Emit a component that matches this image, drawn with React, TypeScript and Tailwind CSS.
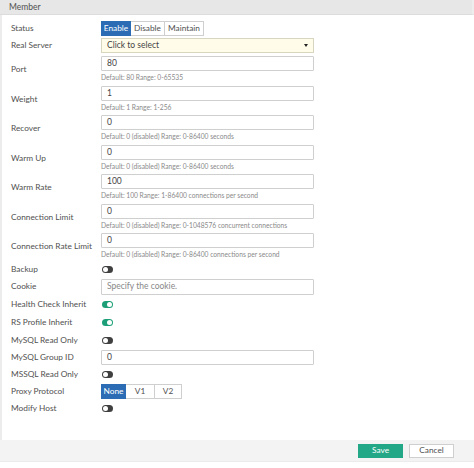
import React from "react";

const font = { fontFamily: "Lato, 'Open Sans', sans-serif" };

function Label({ text }: { text: string }) {
  return (
    <div className="w-[99px] shrink-0 pl-[9px] text-[8.3px] text-[#505050] whitespace-nowrap">
      {text}
    </div>
  );
}

function TextRow({
  label,
  value,
  help,
}: {
  label: string;
  value: string;
  help: string;
}) {
  return (
    <div className="flex items-center mb-[2.5px]">
      <Label text={label} />
      <div className="flex flex-col">
        <div className="w-[213px] h-[15px] border border-[#cfcfcf] rounded-[1px] bg-white flex items-center px-[5px] text-[8.5px] text-[#444]">
          {value}
        </div>
        <div className="h-[12px] leading-[12px] text-[6.7px] text-[#8a8a8a] whitespace-nowrap">
          {help}
        </div>
      </div>
    </div>
  );
}

function Toggle({ on }: { on?: boolean }) {
  return (
    <div
      className={`w-[11px] h-[7px] rounded-full flex items-center px-[1px] ${
        on ? "bg-[#1c9f78] justify-end" : "bg-[#404040] justify-start"
      }`}
    >
      <div className="w-[5px] h-[5px] rounded-full bg-white" />
    </div>
  );
}

function ToggleRow({ label, on }: { label: string; on?: boolean }) {
  return (
    <div className="flex items-center h-[18px]">
      <Label text={label} />
      <div className="pl-[1px]">
        <Toggle on={on} />
      </div>
    </div>
  );
}

export default function App() {
  return (
    <div
      className="w-[474px] h-[468px] bg-white relative overflow-hidden"
      style={font}
    >
      <div className="h-[15px] bg-[#e7e7e7] border-b border-[#dcdcdc] border-r-2 border-r-[#ededed] flex items-center pl-[9px] text-[8.5px] text-[#505050]">
        Member
      </div>
      <div className="border-l-[2px] border-[#ececec] h-[425px] pt-[6px]">
        {/* Status */}
        <div className="flex items-center h-[15px] mb-[2px]">
          <Label text="Status" />
          <div className="flex h-[15px] text-[8.3px]">
            <div className="w-[30px] flex items-center justify-center bg-[#2b6cb5] text-white border border-[#2b6cb5]">
              Enable
            </div>
            <div className="w-[34px] flex items-center justify-center border border-l-0 border-[#cfcfcf] text-[#505050]">
              Disable
            </div>
            <div className="w-[39px] flex items-center justify-center border border-l-0 border-[#cfcfcf] text-[#505050]">
              Maintain
            </div>
          </div>
        </div>
        {/* Real Server */}
        <div className="flex items-center mb-[3px]">
          <Label text="Real Server" />
          <div className="w-[213px] h-[15px] border border-[#d9d6c0] bg-[#fffdea] flex items-center justify-between px-[5px] text-[8.5px] text-[#444]">
            <span>Click to select</span>
            <span className="w-0 h-0 border-l-[2.5px] border-r-[2.5px] border-t-[3px] border-l-transparent border-r-transparent border-t-[#222]" />
          </div>
        </div>
        <TextRow label="Port" value="80" help="Default: 80 Range: 0-65535" />
        <TextRow label="Weight" value="1" help="Default: 1 Range: 1-256" />
        <TextRow
          label="Recover"
          value="0"
          help="Default: 0 (disabled) Range: 0-86400 seconds"
        />
        <TextRow
          label="Warm Up"
          value="0"
          help="Default: 0 (disabled) Range: 0-86400 seconds"
        />
        <TextRow
          label="Warm Rate"
          value="100"
          help="Default: 100 Range: 1-86400 connections per second"
        />
        <TextRow
          label="Connection Limit"
          value="0"
          help="Default: 0 (disabled) Range: 0-1048576 concurrent connections"
        />
        <TextRow
          label="Connection Rate Limit"
          value="0"
          help="Default: 0 (disabled) Range: 0-86400 connections per second"
        />
        <div className="-mt-[2.5px]">
          <ToggleRow label="Backup" />
        </div>
        <div className="flex items-center h-[17px]">
          <Label text="Cookie" />
          <div className="w-[213px] h-[16px] border border-[#cfcfcf] rounded-[1px] flex items-center px-[5px] text-[8.5px] text-[#888]">
            Specify the cookie.
          </div>
        </div>
        <ToggleRow label="Health Check Inherit" on />
        <ToggleRow label="RS Profile Inherit" on />
        <ToggleRow label="MySQL Read Only" />
        <div className="flex items-center h-[16px]">
          <Label text="MySQL Group ID" />
          <div className="w-[213px] h-[15px] border border-[#cfcfcf] rounded-[1px] flex items-center px-[5px] text-[8.5px] text-[#444]">
            0
          </div>
        </div>
        <ToggleRow label="MSSQL Read Only" />
        <div className="flex items-center h-[16px]">
          <Label text="Proxy Protocol" />
          <div className="flex h-[15px] text-[8.3px]">
            <div className="w-[25px] flex items-center justify-center bg-[#2b6cb5] text-white border border-[#2b6cb5]">
              None
            </div>
            <div className="w-[29px] flex items-center justify-center border border-l-0 border-[#cfcfcf] text-[#505050]">
              V1
            </div>
            <div className="w-[27px] flex items-center justify-center border border-l-0 border-[#cfcfcf] text-[#505050]">
              V2
            </div>
          </div>
        </div>
        <ToggleRow label="Modify Host" />
      </div>
      <div className="h-[22px] bg-[#f3f3f3] border-b border-[#ebebeb] flex items-center justify-end gap-[6px] pr-[20px]">
        <div className="w-[45px] h-[14px] bg-[#22a886] text-white text-[8.3px] flex items-center justify-center">
          Save
        </div>
        <div className="w-[45px] h-[14px] bg-white border border-[#cfcfcf] text-[#505050] text-[8.3px] flex items-center justify-center">
          Cancel
        </div>
      </div>
    </div>
  );
}
